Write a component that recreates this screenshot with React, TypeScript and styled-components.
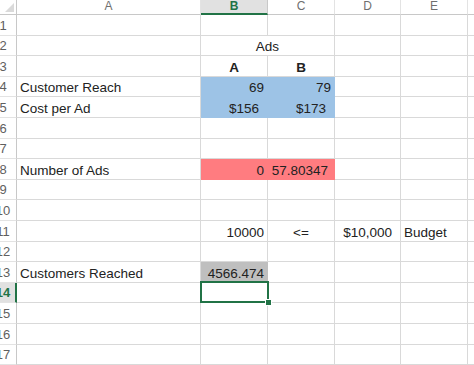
import React from 'react';
import styled, { createGlobalStyle } from 'styled-components';

const GlobalStyle = createGlobalStyle`
  html, body {
    margin: 0;
    padding: 0;
    background: #ffffff;
    overflow: hidden;
  }
  body {
    font-family: "Liberation Sans", Arial, sans-serif;
  }
`;

const GREEN = '#217346';
const GRID = '#d9d9d9';

type Cell = {
  text: string;
  align?: 'left' | 'center' | 'right';
  bold?: boolean;
  fill?: string;
  pad?: number;
  span?: number;
};

const BLUE = '#9dc3e6';
const RED = '#ff7c80';
const GRAY = '#bfbfbf';

const COLS = ['A', 'B', 'C', 'D', 'E', 'F'];
const ROW_COUNT = 17;
const SELECTED = { col: 'B', row: 14 };

const cells: Record<string, Cell> = {
  B2: { text: 'Ads', align: 'center', span: 2 },
  B3: { text: 'A', align: 'center', bold: true },
  C3: { text: 'B', align: 'center', bold: true },
  A4: { text: 'Customer Reach' },
  B4: { text: '69', align: 'right', fill: BLUE },
  C4: { text: '79', align: 'right', fill: BLUE },
  A5: { text: 'Cost per Ad' },
  B5: { text: '$156', align: 'right', fill: BLUE, pad: 8 },
  C5: { text: '$173', align: 'right', fill: BLUE, pad: 8 },
  A8: { text: 'Number of Ads' },
  B8: { text: '0', align: 'right', fill: RED },
  C8: { text: '57.80347', align: 'right', fill: RED, pad: 6 },
  B11: { text: '10000', align: 'right' },
  C11: { text: '<=', align: 'center' },
  D11: { text: '$10,000', align: 'right', pad: 8 },
  E11: { text: 'Budget' },
  A13: { text: 'Customers Reached' },
  B13: { text: '4566.474', align: 'right', fill: GRAY },
};

const Sheet = styled.div`
  display: grid;
  grid-template-columns: 17px 184px 67px 67px 66px 67px 1fr;
  grid-template-rows: 15px repeat(${ROW_COUNT}, 20.6px);
  width: 474px;
  height: 365px;
  overflow: hidden;
`;

const Corner = styled.div`
  position: relative;
  border-right: 1px solid #c8c8c8;
  border-bottom: 1px solid #c8c8c8;
  background: #ffffff;

  &::after {
    content: '';
    position: absolute;
    right: 2px;
    bottom: 2px;
    border-left: 9px solid transparent;
    border-bottom: 9px solid #dadada;
  }
`;

const ColHeader = styled.div<{ $active?: boolean }>`
  display: flex;
  justify-content: center;
  align-items: flex-start;
  overflow: hidden;
  font-size: 12px;
  line-height: 13px;
  color: ${p => (p.$active ? GREEN : '#6f6f6f')};
  background: ${p => (p.$active ? '#e1e1e1' : '#ffffff')};
  border-right: 1px solid ${p => (p.$active ? '#c8c8c8' : '#e3e3e3')};
  border-bottom: ${p => (p.$active ? `2px solid ${GREEN}` : '1px solid #c8c8c8')};
  font-weight: ${p => (p.$active ? 'bold' : 'normal')};
`;

const RowHeader = styled.div<{ $active?: boolean }>`
  display: flex;
  align-items: flex-end;
  overflow: hidden;
  font-size: 13px;
  line-height: 16px;
  padding-bottom: 1px;
  box-sizing: border-box;
  color: ${p => (p.$active ? GREEN : '#5f5f5f')};
  background: ${p => (p.$active ? '#e1e1e1' : '#ffffff')};
  border-right: ${p => (p.$active ? `2px solid ${GREEN}` : '1px solid #c8c8c8')};
  border-bottom: 1px solid #e3e3e3;
  font-weight: ${p => (p.$active ? 'bold' : 'normal')};
`;

const RowNumber = styled.span`
  flex: none;
  width: 22px;
  margin-left: -8px;
  text-align: center;
`;

const CellBox = styled.div<{
  $fill?: string;
  $align?: string;
  $bold?: boolean;
  $pad?: number;
  $span?: number;
}>`
  position: relative;
  grid-column: span ${p => p.$span || 1};
  display: flex;
  align-items: flex-end;
  justify-content: ${p =>
    p.$align === 'right' ? 'flex-end' : p.$align === 'center' ? 'center' : 'flex-start'};
  box-sizing: border-box;
  padding: 0 ${p => p.$pad ?? 3}px 0 3px;
  font-size: 13.5px;
  line-height: 17px;
  white-space: nowrap;
  color: #222222;
  font-weight: ${p => (p.$bold ? 'bold' : 'normal')};
  background: ${p => p.$fill || '#ffffff'};
  border-right: 1px solid ${p => p.$fill || GRID};
  border-bottom: 1px solid ${p => p.$fill || GRID};
`;

const SelectionBox = styled.div`
  position: absolute;
  z-index: 2;
  top: -2px;
  left: -1px;
  right: -2px;
  bottom: -1px;
  border: 2px solid ${GREEN};
  pointer-events: none;
`;

const FillHandle = styled.div`
  position: absolute;
  right: -5px;
  bottom: -5px;
  width: 5px;
  height: 5px;
  background: ${GREEN};
  border: 1px solid #ffffff;
`;

export default function App() {
  const rows = Array.from({ length: ROW_COUNT }, (_, i) => i + 1);

  return (
    <>
      <GlobalStyle />
      <Sheet>
        <Corner />
        {COLS.map(c => (
          <ColHeader key={c} $active={c === SELECTED.col}>
            {c === 'F' ? '' : c}
          </ColHeader>
        ))}
        {rows.map(r => {
          const out: React.ReactNode[] = [
            <RowHeader key={`h${r}`} $active={r === SELECTED.row}>
              <RowNumber>{r}</RowNumber>
            </RowHeader>,
          ];
          let skip = 0;
          COLS.forEach(c => {
            if (skip > 0) {
              skip--;
              return;
            }
            const cell = cells[`${c}${r}`];
            const selected = c === SELECTED.col && r === SELECTED.row;
            if (cell?.span) skip = cell.span - 1;
            out.push(
              <CellBox
                key={`${c}${r}`}
                $fill={cell?.fill}
                $align={cell?.align}
                $bold={cell?.bold}
                $pad={cell?.pad}
                $span={cell?.span}
              >
                {cell?.text}
                {selected && (
                  <SelectionBox>
                    <FillHandle />
                  </SelectionBox>
                )}
              </CellBox>
            );
          });
          return out;
        })}
      </Sheet>
    </>
  );
}
